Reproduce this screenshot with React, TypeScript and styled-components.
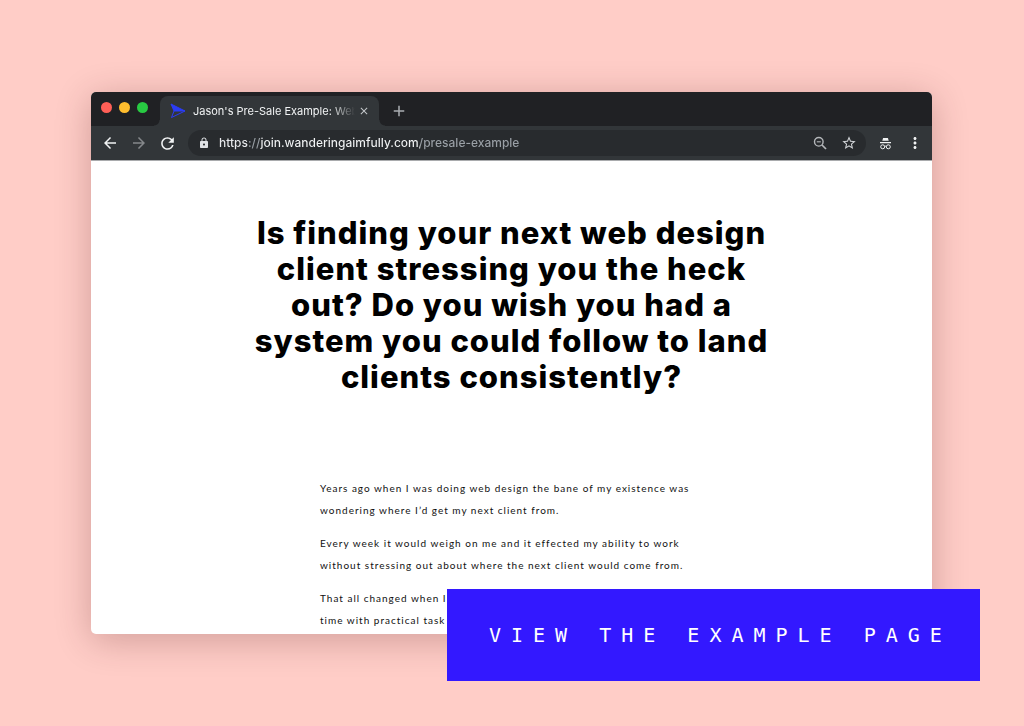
import React from "react";
import styled, { createGlobalStyle } from "styled-components";
import {
  MdAdd,
  MdArrowBack,
  MdArrowForward,
  MdClose,
  MdLock,
  MdMoreVert,
  MdRefresh,
  MdStarBorder,
} from "react-icons/md";

const GlobalStyle = createGlobalStyle`
  * { box-sizing: border-box; }
  body {
    margin: 0;
    background: #ffcdc7;
    font-family: Inter, "Liberation Sans", sans-serif;
  }
  button { font: inherit; }
  svg { flex: none; }
`;

const Page = styled.div`
  display: flex;
  flex-direction: column;
  min-height: 100vh;
  padding: 92px 44px 44px 91px;
`;

const BrowserWindow = styled.section`
  margin-right: 48px;
  border-radius: 5px;
  background: #fff;
  box-shadow: 0 6px 36px rgba(60, 10, 10, 0.24);
`;

const TabStrip = styled.div`
  display: flex;
  align-items: flex-end;
  height: 34px;
  border-radius: 5px 5px 0 0;
  background: #202124;
`;

const Lights = styled.div`
  display: flex;
  gap: 7px;
  padding: 0 12px 13px 10px;
`;

const Light = styled.span<{ $color: string }>`
  width: 11px;
  height: 11px;
  border-radius: 50%;
  background: ${(p) => p.$color};
`;

const Tab = styled.div`
  position: relative;
  display: flex;
  align-items: center;
  width: 219px;
  height: 30px;
  padding: 0 7px 0 10px;
  border-radius: 8px 8px 0 0;
  background: #323639;

  &::before,
  &::after {
    content: "";
    position: absolute;
    bottom: 0;
    width: 6px;
    height: 6px;
  }
  &::before {
    right: 100%;
    background: radial-gradient(circle at 0 0, transparent 5px, #323639 6px);
  }
  &::after {
    left: 100%;
    background: radial-gradient(circle at 100% 0, transparent 5px, #323639 6px);
  }
`;

const TabTitle = styled.span`
  flex: 1;
  min-width: 0;
  margin-left: 7px;
  white-space: nowrap;
  color: #f1f3f4;
  font-size: 11px;
  font-weight: 400;
  line-height: 16px;
  mask-image: linear-gradient(90deg, #000 138px, transparent 162px);
`;

const IconButton = styled.button<{ $width?: number; $color?: string }>`
  display: flex;
  flex: none;
  align-items: center;
  justify-content: center;
  width: ${(p) => p.$width ?? 29}px;
  height: 25px;
  padding: 0;
  border: 0;
  background: none;
  color: ${(p) => p.$color ?? "#f1f3f4"};
`;

const NewTab = styled(IconButton)`
  height: 30px;
  margin-left: 5px;
`;

const Toolbar = styled.div`
  display: flex;
  align-items: center;
  height: 35px;
  padding: 0 3px 0 4px;
  border-bottom: 1px solid #a9abad;
  background: #323639;
`;

const AddressBar = styled.label`
  display: flex;
  flex: 1;
  align-items: center;
  min-width: 0;
  height: 26px;
  margin: 0 5px 0 6px;
  padding: 0 3px 0 10px;
  border-radius: 13px;
  background: #282b2e;
  color: #dfe1e5;
`;

const Address = styled.input`
  flex: 1;
  min-width: 0;
  margin-left: 9px;
  padding: 0;
  border: 0;
  outline: 0;
  background: linear-gradient(90deg, #e8eaed 29px, #9aa0a6 29px 41px, #f1f3f4 41px 201px, #9aa0a6 201px);
  background-clip: text;
  -webkit-text-fill-color: transparent;
  font-family: inherit;
  font-size: 12px;
  font-weight: 500;
  line-height: 20px;
`;

const Article = styled.main`
  padding: 54px 24px 3px;
  color: #000;
`;

const Headline = styled.h1`
  margin: 0;
  font-size: 31px;
  font-weight: 800;
  line-height: 36px;
  letter-spacing: 1px;
  text-align: center;
`;

const Copy = styled.div`
  display: flex;
  flex-direction: column;
  gap: 11px;
  max-width: 383px;
  margin: 82px auto 0;
`;

const Paragraph = styled.p`
  margin: 0;
  color: #111;
  font-family: Lato, "Liberation Sans", sans-serif;
  font-size: 10px;
  line-height: 22px;
  letter-spacing: 1px;
  white-space: nowrap;
`;

const ViewLink = styled.a`
  z-index: 1;
  align-self: flex-end;
  width: 533px;
  max-width: 100%;
  margin-top: -45px;
  padding: 30px 24px 30px 42px;
  background: #3318ff;
  color: #fff;
  font-family: "DejaVu Sans Mono", monospace;
  font-size: 20px;
  line-height: 32px;
  letter-spacing: 10px;
  text-decoration: none;
  white-space: nowrap;
`;

const PlaneIcon = () => (
  <svg width="16" height="16" viewBox="0 0 16 16" aria-hidden="true">
    <path d="M1 1 15 8 4 8Z" fill="#2b3cf5" stroke="#2b3cf5" strokeLinejoin="round" />
    <path d="M4 8 1.5 14.5 15 8" fill="none" stroke="#2b3cf5" strokeLinejoin="round" />
  </svg>
);

const ZoomOutIcon = () => (
  <svg width="14" height="14" viewBox="0 0 14 14" fill="none" stroke="currentColor" aria-hidden="true">
    <circle cx="5.8" cy="5.8" r="4.3" strokeWidth="1.4" />
    <path d="m9 9 4 4" strokeWidth="1.7" />
    <path d="M3.8 5.8h4" strokeWidth="1.1" />
  </svg>
);

const IncognitoIcon = () => (
  <svg width="13" height="13" viewBox="0 0 13 13" fill="currentColor" aria-hidden="true">
    <path d="M4.1 1h4.8l.8 2.8H3.3ZM1 5h11v1.2H1Z" />
    <g fill="none" stroke="currentColor">
      <circle cx="3.7" cy="9.8" r="2" />
      <circle cx="9.3" cy="9.8" r="2" />
      <path d="M5.6 9.5q.9-.7 1.8 0" />
    </g>
  </svg>
);

const headline = [
  "Is finding your next web design",
  "client stressing you the heck",
  "out? Do you wish you had a",
  "system you could follow to land",
  "clients consistently?",
];

const paragraphs = [
  ["Years ago when I was doing web design the bane of my existence was", "wondering where I’d get my next client from."],
  ["Every week it would weigh on me and it effected my ability to work", "without stressing out about where the next client would come from."],
  ["That all changed when I", "time with practical task"],
];

const Lines = ({ lines }: { lines: string[] }) => (
  <>
    {lines.map((line, i) => (
      <React.Fragment key={line}>
        {i > 0 && <br />}
        {line}
      </React.Fragment>
    ))}
  </>
);

export default function App() {
  return (
    <Page>
      <GlobalStyle />
      <BrowserWindow>
        <TabStrip>
          <Lights>
            <Light $color="#ff5f57" />
            <Light $color="#ffbd2e" />
            <Light $color="#28ca42" />
          </Lights>
          <Tab>
            <PlaneIcon />
            <TabTitle>Jason's Pre-Sale Example: Web</TabTitle>
            <IconButton $width={16} $color="#c4c7ca" aria-label="Close tab">
              <MdClose size={12} />
            </IconButton>
          </Tab>
          <NewTab $color="#a9adb1" aria-label="New tab">
            <MdAdd size={18} />
          </NewTab>
        </TabStrip>
        <Toolbar>
          <IconButton aria-label="Back"><MdArrowBack size={18} /></IconButton>
          <IconButton $color="#85888b" aria-label="Forward"><MdArrowForward size={18} /></IconButton>
          <IconButton aria-label="Reload"><MdRefresh size={19} /></IconButton>
          <AddressBar>
            <MdLock size={12} />
            <Address aria-label="Address" defaultValue="https://join.wanderingaimfully.com/presale-example" />
            <IconButton $color="#b4b7ba" aria-label="Zoom out"><ZoomOutIcon /></IconButton>
            <IconButton $color="#d0d3d6" aria-label="Bookmark"><MdStarBorder size={16} /></IconButton>
          </AddressBar>
          <IconButton aria-label="Incognito"><IncognitoIcon /></IconButton>
          <IconButton aria-label="Menu"><MdMoreVert size={18} /></IconButton>
        </Toolbar>
        <Article>
          <Headline><Lines lines={headline} /></Headline>
          <Copy>
            {paragraphs.map((lines) => (
              <Paragraph key={lines[0]}><Lines lines={lines} /></Paragraph>
            ))}
          </Copy>
        </Article>
      </BrowserWindow>
      <ViewLink href="#example">VIEW THE EXAMPLE PAGE</ViewLink>
    </Page>
  );
}
